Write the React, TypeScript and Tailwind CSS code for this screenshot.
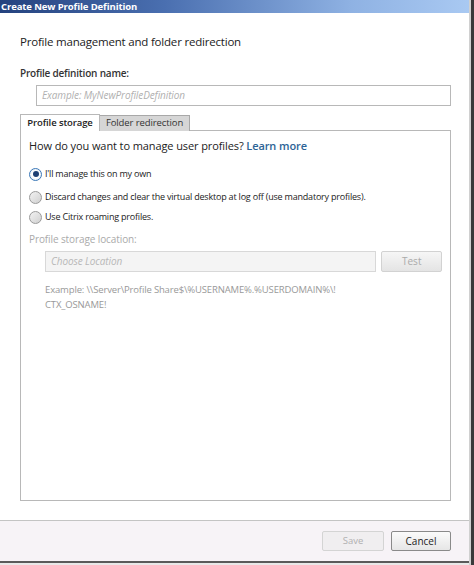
import React from "react";

function Radio({ checked }: { checked?: boolean }) {
  return (
    <div
      className={
        "w-[13px] h-[13px] rounded-full border flex items-center justify-center shrink-0 " +
        (checked
          ? "border-[#3b78b8] bg-[radial-gradient(circle,#ffffff_40%,#dfe8f2_100%)]"
          : "border-[#9a9a9a] bg-[linear-gradient(135deg,#f2f2f2,#d0d0d0)]")
      }
    >
      {checked && <div className="w-[6px] h-[6px] rounded-full bg-[#1d3f73]" />}
    </div>
  );
}

export default function App() {
  return (
    <div className="w-[474px] h-[565px] flex bg-white font-['Open_Sans',sans-serif] overflow-hidden">
      <div className="w-[469px] flex flex-col">
        <div className="h-[13px] bg-[linear-gradient(90deg,#24427e_0%,#4a6fb0_35%,#8fb2e3_75%,#a9c9f2_100%)] flex items-center pl-[1px]">
          <span className="text-white font-bold text-[9.5px] leading-none tracking-[-0.1px]">
            Create New Profile Definition
          </span>
        </div>
        <div className="flex-1 flex flex-col pl-[20px] pr-[18px]">
          <div className="mt-[21px] text-[11.5px] leading-[16px] tracking-[-0.2px] text-[#222]">
            Profile management and folder redirection
          </div>
          <div className="mt-[16px] text-[10px] leading-[14px] tracking-[-0.2px] font-semibold text-[#333]">
            Profile definition name:
          </div>
          <div className="mt-[5px] ml-[16px] h-[21px] border border-[#b8b8b8] flex items-center pl-[5px]">
            <span className="italic text-[10px] tracking-[-0.1px] text-[#b0b0b0]">Example: MyNewProfileDefinition</span>
          </div>
          <div className="mt-[8px] flex h-[17px] relative z-10">
            <div className="w-[80px] border border-b-0 border-[#b8b8b8] bg-white flex items-center justify-center text-[9.5px] tracking-[-0.1px] font-semibold text-[#222]">
              Profile storage
            </div>
            <div className="w-[90px] border border-l-0 border-b-0 border-[#a8a8a8] bg-[#d6d6d6] flex items-center justify-center text-[9.5px] tracking-[-0.1px] text-[#333] mt-[1px]">
              Folder redirection
            </div>
          </div>
          <div className="-mt-[1px] h-[371px] border border-[#b8b8b8] flex flex-col pl-[8px] pr-[8px]">
            <div className="mt-[7px] text-[11px] leading-[16px] tracking-[-0.1px] text-[#222]">
              How do you want to manage user profiles?{" "}
              <span className="font-semibold text-[#2d6496]">Learn more</span>
            </div>
            <div className="mt-[13px] flex items-center gap-[3px] h-[14px]">
              <Radio checked />
              <span className="text-[9px] tracking-[-0.2px] text-[#222]">I'll manage this on my own</span>
            </div>
            <div className="mt-[9px] flex items-center gap-[3px] h-[14px]">
              <Radio />
              <span className="text-[9px] tracking-[-0.2px] text-[#222]">
                Discard changes and clear the virtual desktop at log off (use mandatory profiles).
              </span>
            </div>
            <div className="mt-[6px] flex items-center gap-[3px] h-[14px]">
              <Radio />
              <span className="text-[9px] tracking-[-0.2px] text-[#222]">Use Citrix roaming profiles.</span>
            </div>
            <div className="mt-[8px] text-[10px] leading-[14px] tracking-[-0.1px] text-[#aaa]">Profile storage location:</div>
            <div className="mt-[5px] ml-[16px] flex gap-[5px] h-[21px]">
              <div className="w-[334px] border border-[#d8d8d8] bg-[#f4f4f4] flex items-center pl-[5px]">
                <span className="italic text-[10px] tracking-[-0.1px] text-[#b8b8b8]">Choose Location</span>
              </div>
              <div className="w-[61px] border border-[#d2d2d2] rounded-[2px] bg-[linear-gradient(#f6f6f6,#e4e4e4)] flex items-center justify-center text-[10px] text-[#aaa]">
                Test
              </div>
            </div>
            <div className="mt-[10px] ml-[16px] text-[9.5px] leading-[15px] tracking-[-0.15px] text-[#999]">
              Example: \\Server\Profile Share$\%USERNAME%.%USERDOMAIN%\!
              <br />
              CTX_OSNAME!
            </div>
          </div>
          <div className="flex-1" />
        </div>
        <div className="h-[41px] border-t border-[#c4c4c4] bg-[#f7f3f7] flex items-center justify-end gap-[7px] pr-[18px]">
          <div className="w-[62px] h-[20px] border border-[#d4d4d4] rounded-[2px] bg-[#f0eef0] flex items-center justify-center text-[9.5px] text-[#b0b0b0]">
            Save
          </div>
          <div className="w-[60px] h-[20px] border border-[#8a8a8a] rounded-[2px] bg-[linear-gradient(#fbfbfb,#e6e6e6)] flex items-center justify-center text-[10px] text-[#222]">
            Cancel
          </div>
        </div>
        <div className="h-[2px] bg-[#5a5a5a]" />
        <div className="h-[2px] bg-[#e8e8e8]" />
      </div>
      <div className="w-[2px] bg-[#d0d0d0]" />
      <div className="w-[3px] bg-[#3a3a3a]" />
    </div>
  );
}
